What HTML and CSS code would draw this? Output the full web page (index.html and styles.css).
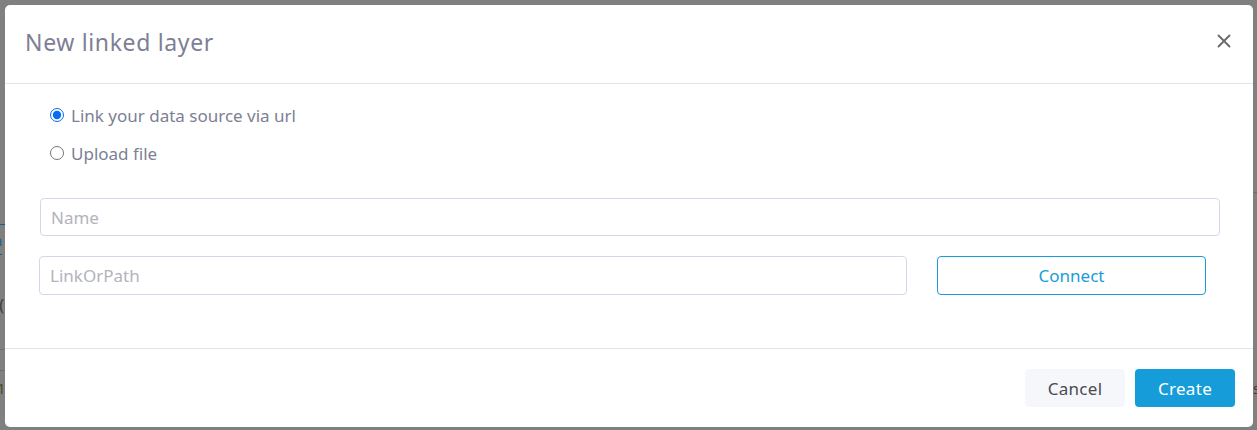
FILE: index.html
```html
<!DOCTYPE html>
<html lang="en">
<head>
<meta charset="utf-8">
<title>New linked layer</title>
<link rel="stylesheet" href="styles.css">
</head>
<body>
<div class="backdrop">
  <div class="bg-left">
    <div class="bg-line bg-line-top"></div>
    <div class="bg-tab">a</div>
    <div class="bg-text">i(</div>
    <div class="bg-rule r1"></div>
    <div class="bg-num">1</div>
    <div class="bg-rule r2"></div>
  </div>
  <div class="bg-right">
    <div class="bg-rline"></div>
    <div class="bg-s">s</div>
  </div>
  <div class="modal">
    <div class="modal-header">
      <h5 class="modal-title">New linked layer</h5>
      <button class="close" type="button" aria-label="Close">
        <svg width="14" height="14" viewBox="0 0 14 14"><path d="M1.5 1.5 L12.5 12.5 M12.5 1.5 L1.5 12.5" stroke="#6b6b6b" stroke-width="1.9" stroke-linecap="round" fill="none"/></svg>
      </button>
    </div>
    <div class="modal-body">
      <div class="radios">
        <label class="radio"><input type="radio" name="src" checked><span>Link your data source via url</span></label>
        <label class="radio"><input type="radio" name="src"><span>Upload file</span></label>
      </div>
      <div class="fields">
        <input class="field field-name" type="text" placeholder="Name">
        <div class="link-row">
          <input class="field field-link" type="text" placeholder="LinkOrPath">
          <button class="btn-connect" type="button">Connect</button>
        </div>
      </div>
    </div>
    <div class="modal-footer">
      <button class="btn btn-cancel" type="button">Cancel</button>
      <button class="btn btn-create" type="button">Create</button>
    </div>
  </div>
</div>
</body>
</html>
```
FILE: styles.css
```css
* { box-sizing: border-box; }
html, body { margin: 0; padding: 0; }
body {
  width: 1257px;
  height: 430px;
  overflow: hidden;
  background: #808080;
  font-family: "Noto Sans", "Open Sans", sans-serif;
}
.backdrop {
  position: relative;
  width: 1257px;
  height: 430px;
  padding: 5px 4px 3px 5px;
}
.bg-left { position: absolute; left: 0; top: 0; width: 5px; height: 430px; overflow: hidden; }
.bg-line-top { position: absolute; left: 0; top: 224px; width: 5px; height: 1px; background: #1c5f86; }
.bg-tab { position: absolute; left: -6px; top: 230px; font-size: 15px; color: #1f6690; border-bottom: 1px solid #1c5f86; padding-bottom: 4px; }
.bg-text { position: absolute; left: -5px; top: 294px; font-size: 16px; color: #3c3c3c; }
.bg-rule { position: absolute; left: 0; width: 5px; height: 1px; background: #6e6e6e; }
.r1 { top: 349px; }
.r2 { top: 370px; }
.bg-num { position: absolute; left: -3px; top: 378px; font-size: 15px; color: #4a4a30; }
.bg-right { position: absolute; right: 0; top: 0; width: 4px; height: 430px; overflow: hidden; }
.bg-rline { position: absolute; left: 0; top: 192px; width: 4px; height: 1px; background: #6e6e6e; }
.bg-s { position: absolute; left: 0; top: 378px; font-size: 15px; color: #3c3c3c; }

.modal {
  position: relative;
  width: 1248px;
  height: 422px;
  background: #ffffff;
  border-radius: 5px;
  display: flex;
  flex-direction: column;
}
.modal-header {
  height: 79px;
  flex: none;
  border-bottom: 1px solid #e3e3ec;
  display: flex;
  align-items: center;
  justify-content: space-between;
  padding: 0 22px 0 20px;
}
.modal-title {
  margin: 0;
  font-size: 23px;
  font-weight: 400;
  color: #7d8094;
  letter-spacing: 0.65px;
  padding-bottom: 4px;
}
.close {
  border: 0;
  background: transparent;
  padding: 0;
  width: 14px;
  height: 14px;
  display: block;
  margin-bottom: 6px;
}
.close svg { display: block; }
.modal-body {
  flex: 1;
  padding: 19px 32px 0 34px;
  border-bottom: 1px solid #e3e3ec;
}
.radios { padding-left: 11px; display: flex; flex-direction: column; gap: 14px; }
.radio {
  display: flex;
  align-items: center;
  gap: 7px;
  font-size: 17px;
  color: #7d8094;
  height: 24px;
}
.radio input {
  margin: 0;
  width: 14px;
  height: 14px;
  accent-color: #0a6cf0;
}
.fields { margin-top: 33px; display: flex; flex-direction: column; gap: 20px; }
.field {
  height: 38px;
  border: 1px solid #d8d5e8;
  border-radius: 4px;
  padding: 0 10px;
  font-family: inherit;
  font-size: 17px;
  color: #555;
  outline: none;
}
.field::placeholder { color: #b3b3bb; }
.field-name { margin-left: 1px; width: 1180px; }
.link-row { display: flex; gap: 30px; align-items: stretch; }
.field-link { width: 868px; height: 39px; }
.btn-connect {
  width: 269px;
  height: 39px;
  background: #fff;
  border: 1px solid #1a9cd8;
  border-radius: 4px;
  color: #1a9cd8;
  font-family: inherit;
  font-size: 17px;
}
.modal-footer {
  height: 78px;
  flex: none;
  display: flex;
  justify-content: flex-end;
  align-items: center;
  gap: 10px;
  padding: 0 18px 0 0;
}
.btn {
  width: 100px;
  height: 38px;
  border: 0;
  border-radius: 4px;
  font-family: inherit;
  font-size: 17px;
  letter-spacing: 0.3px;
}
.btn-cancel { background: #f6f7fb; color: #4a4a52; }
.btn-create { background: #169dd9; color: #ffffff; }
```
